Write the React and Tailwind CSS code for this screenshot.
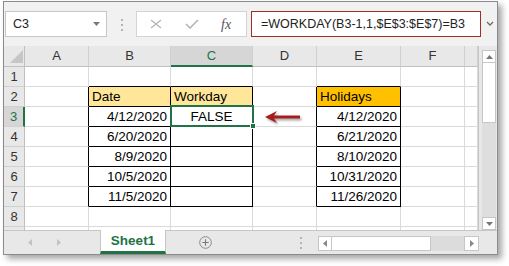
import React from 'react';

const font = { fontFamily: '"Liberation Sans", Arial, sans-serif' };

const COLS = ['A', 'B', 'C', 'D', 'E', 'F', ''];

const ROWS = [
  { n: 1 },
  { n: 2, B: 'Date', C: 'Workday', E: 'Holidays' },
  { n: 3, B: '4/12/2020', C: 'FALSE', E: '4/12/2020' },
  { n: 4, B: '6/20/2020', E: '6/21/2020' },
  { n: 5, B: '8/9/2020', E: '8/10/2020' },
  { n: 6, B: '10/5/2020', E: '10/31/2020' },
  { n: 7, B: '11/5/2020', E: '11/26/2020' },
  { n: 8 },
];

const inTable = (n) => n >= 2 && n <= 7;

const Arrow = () => (
  <svg width="42" height="22" viewBox="0 0 42 22" className="absolute left-[10px] top-[0px] z-10">
    <defs>
      <filter id="sh" x="-20%" y="-40%" width="140%" height="180%">
        <feGaussianBlur stdDeviation="1.2" />
      </filter>
    </defs>
    <path d="M3.5 12 L15.5 6 L12.5 10.5 H38.5 V13.5 H12.5 L15.5 18 Z" fill="#000" opacity="0.35" filter="url(#sh)" />
    <path d="M2 10 L14 4 L11 8.5 H37 V11.5 H11 L14 16 Z" fill="#a51d1d" />
  </svg>
);

const Cell = ({ row, col }) => {
  const n = row.n;
  const rightBlack = inTable(n) && ['A', 'B', 'C', 'D', 'E'].includes(col);
  const bottomBlack = n >= 1 && n <= 7 && ['B', 'C', 'E'].includes(col);
  const value = row[col];
  let bg = '';
  if (n === 2 && (col === 'B' || col === 'C')) bg = 'bg-[#ffe699]';
  if (n === 2 && col === 'E') bg = 'bg-[#ffc000]';
  const align = n === 2 ? 'justify-start pl-[3px]' : value === 'FALSE' ? 'justify-center' : 'justify-end pr-[3px]';

  return (
    <div
      className={`relative flex h-[20px] items-center border-r border-b text-[13.5px] leading-[20px] text-black ${align} ${bg} ${rightBlack ? 'border-r-black' : 'border-r-[#dadada]'} ${bottomBlack ? 'border-b-black' : 'border-b-[#dadada]'}`}
    >
      {value}
      {n === 3 && col === 'C' && (
        <div className="absolute left-[-1px] top-[-2px] z-20 h-[22px] w-[84px] border-2 border-[#217346]">
          <div className="absolute right-[-4px] bottom-[-4px] h-[6px] w-[6px] border border-white bg-[#217346]" />
        </div>
      )}
      {n === 3 && col === 'D' && <Arrow />}
    </div>
  );
};

const Dots = () => (
  <div className="flex flex-col gap-[3px]">
    <span className="h-[2px] w-[2px] bg-[#b4b4b4]" />
    <span className="h-[2px] w-[2px] bg-[#b4b4b4]" />
    <span className="h-[2px] w-[2px] bg-[#b4b4b4]" />
  </div>
);

const FormulaBar = () => (
  <div className="flex h-[44px] items-start bg-[#f1f1f1] pt-[9px]">
    <div className="ml-[1px] flex h-[26px] w-[102px] items-center justify-between border border-[#c6c6c6] bg-white pl-[7px] pr-[6px]">
      <span className="text-[12.5px] text-[#222]">C3</span>
      <svg width="7" height="4" viewBox="0 0 7 4"><path d="M0 0 H7 L3.5 4 Z" fill="#7a7a7a" /></svg>
    </div>
    <div className="ml-[14px] mt-[8px]"><Dots /></div>
    <div className="ml-[13px] flex h-[26px] w-[111px] items-center border border-[#d4d4d4] bg-white">
      <svg width="12" height="10" viewBox="0 0 12 10" className="ml-[13px]">
        <path d="M1 1 L11 9 M11 1 L1 9" stroke="#b4b4b4" strokeWidth="1.3" />
      </svg>
      <svg width="14" height="10" viewBox="0 0 14 10" className="ml-[23px]">
        <path d="M1 5 L5 9 L13 1" stroke="#b4b4b4" strokeWidth="1.6" fill="none" />
      </svg>
      <span className="ml-[22px] font-serif text-[14px] italic text-[#555]" style={{ fontFamily: '"Liberation Serif", serif' }}>
        fx
      </span>
    </div>
    <div className="ml-[4px] flex h-[26px] w-[230px] items-center border border-[#a52a2a] bg-white pl-[9px]">
      <span className="text-[12.5px] text-[#222]">=WORKDAY(B3-1,1,$E$3:$E$7)=B3</span>
    </div>
    <svg width="8" height="5" viewBox="0 0 8 5" className="ml-[5px] mt-[10px]">
      <path d="M1 1 L4 4 L7 1" stroke="#6a6a6a" strokeWidth="1.3" fill="none" />
    </svg>
  </div>
);

const Grid = () => (
  <div className="grid grid-cols-[21px_64px_82px_82px_64px_84px_64px_13px] grid-rows-[21px_repeat(8,20px)_3px] bg-white">
    <div className="relative border-r border-b border-r-[#c0c0c0] border-b-[#c0c0c0] bg-[#e8e8e8]">
      <svg width="13" height="13" viewBox="0 0 13 13" className="absolute left-[6px] top-[4px]">
        <path d="M13 0 V13 H0 Z" fill="#c6c6c6" />
      </svg>
    </div>
    {COLS.map((c) => (
      <div
        key={c || 'x'}
        className={`flex items-center justify-center border-r border-r-[#d0d0d0] text-[13px] ${c === 'C' ? 'border-b-2 border-b-[#217346] bg-[#d6d6d6] text-[#217346]' : 'border-b border-b-[#c0c0c0] bg-[#e8e8e8] text-[#333]'}`}
      >
        {c}
      </div>
    ))}
    {ROWS.map((row) => (
      <React.Fragment key={row.n}>
        <div
          className={`flex items-center justify-center border-b border-b-[#d0d0d0] text-[13px] ${row.n === 3 ? 'border-r-2 border-r-[#217346] bg-[#d6d6d6] text-[#217346]' : 'border-r border-r-[#c0c0c0] bg-[#e8e8e8] text-[#333]'}`}
        >
          {row.n}
        </div>
        {COLS.map((c) => (
          <Cell key={c || 'x'} row={row} col={c} />
        ))}
      </React.Fragment>
    ))}
    <div className="border-r border-r-[#c0c0c0] bg-[#e8e8e8]" />
    {COLS.map((c) => (
      <div key={c || 'x'} className="border-r border-r-[#dadada]" />
    ))}
  </div>
);

const VScroll = () => (
  <div className="flex w-[19px] flex-col border-l border-[#c6c6c6] bg-[#e8e8e8] pl-[3px] pt-[4px]">
    <div className="flex h-[13px] w-[14px] items-center justify-center border border-[#c6c6c6] bg-white">
      <svg width="7" height="4" viewBox="0 0 7 4"><path d="M0 4 H7 L3.5 0 Z" fill="#777" /></svg>
    </div>
    <div className="h-[60px] w-[14px] border border-t-0 border-[#c6c6c6] bg-white" />
    <div className="flex-1 bg-[#dedede] w-[14px]" />
    <div className="flex h-[13px] w-[14px] items-center justify-center border border-[#c6c6c6] bg-white">
      <svg width="7" height="4" viewBox="0 0 7 4"><path d="M0 0 H7 L3.5 4 Z" fill="#777" /></svg>
    </div>
  </div>
);

const TabBar = () => (
  <div className="flex h-[24px] items-stretch border-t border-[#c6c6c6] bg-[#e8e8e8]">
    <div className="flex w-[96px] items-center">
      <svg width="4" height="7" viewBox="0 0 4 7" className="ml-[24px]"><path d="M4 0 V7 L0 3.5 Z" fill="#c2c2c2" /></svg>
      <svg width="4" height="7" viewBox="0 0 4 7" className="ml-[25px]"><path d="M0 0 V7 L4 3.5 Z" fill="#c2c2c2" /></svg>
    </div>
    <div className="mt-[-1px] flex w-[66px] items-center justify-center border-x border-b-[3px] border-x-[#c6c6c6] border-b-[#217346] bg-white pt-[1px] text-[13.5px] font-bold text-[#217346]">
      Sheet1
    </div>
    <div className="flex w-[136px] items-center">
      <svg width="15" height="15" viewBox="0 0 15 15" className="ml-[33px]">
        <circle cx="7.5" cy="7.5" r="6.7" stroke="#7c7c7c" strokeWidth="1" fill="none" />
        <path d="M7.5 3.8 V11.2 M3.8 7.5 H11.2" stroke="#7c7c7c" strokeWidth="1.3" />
      </svg>
      <div className="ml-[88px]"><Dots /></div>
    </div>
    <div className="flex items-center pt-[1px]">
      <div className="ml-[16px] flex h-[15px] w-[14px] items-center justify-center border border-[#c6c6c6] bg-white">
        <svg width="4" height="7" viewBox="0 0 4 7"><path d="M4 0 V7 L0 3.5 Z" fill="#888" /></svg>
      </div>
      <div className="h-[15px] w-[99px] border border-l-0 border-[#c6c6c6] bg-white" />
      <div className="h-[15px] w-[33px] bg-[#dcdcdc]" />
      <div className="flex h-[15px] w-[15px] items-center justify-center border border-[#c6c6c6] bg-white">
        <svg width="4" height="7" viewBox="0 0 4 7"><path d="M0 0 V7 L4 3.5 Z" fill="#888" /></svg>
      </div>
    </div>
  </div>
);

export default function App() {
  return (
    <div className="h-[266px] w-[509px] bg-white pl-[3px] pt-[1px]" style={font}>
      <div className="flex h-[254px] w-[495px] flex-col border border-[#8c8c8c] bg-[#f1f1f1] shadow-[4px_4px_6px_rgba(0,0,0,0.35)]">
        <FormulaBar />
        <div className="flex">
          <Grid />
          <VScroll />
        </div>
        <TabBar />
      </div>
    </div>
  );
}
